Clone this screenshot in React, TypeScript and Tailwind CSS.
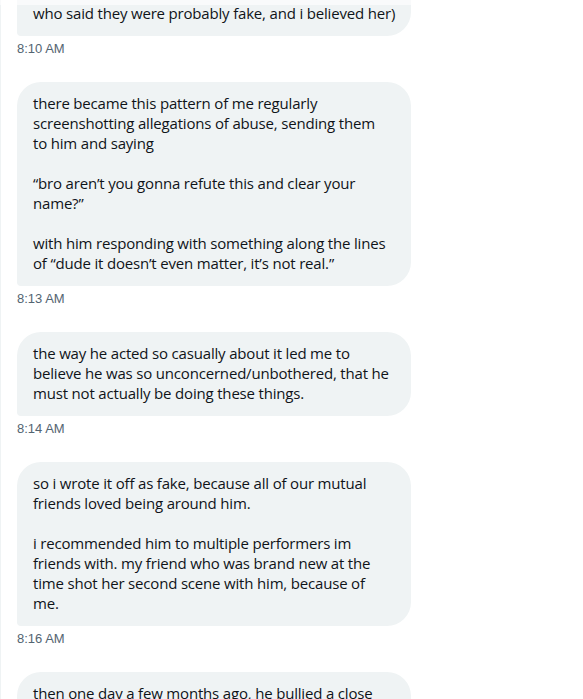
import React from "react";

type Message = {
  paragraphs: string[][];
  time?: string;
};

const messages: Message[] = [
  {
    // first bubble is scrolled partly out of view, the blank line stands in for the hidden one
    paragraphs: [["\u00a0", "who said they were probably fake, and i believed her)"]],
    time: "8:10 AM",
  },
  {
    paragraphs: [
      ["there became this pattern of me regularly", "screenshotting allegations of abuse, sending them", "to him and saying"],
      ["\u201cbro aren\u2019t you gonna refute this and clear your", "name?\u201d"],
      ["with him responding with something along the lines", "of \u201cdude it doesn\u2019t even matter, it\u2019s not real.\u201d"],
    ],
    time: "8:13 AM",
  },
  {
    paragraphs: [
      ["the way he acted so casually about it led me to", "believe he was so unconcerned/unbothered, that he", "must not actually be doing these things."],
    ],
    time: "8:14 AM",
  },
  {
    paragraphs: [
      ["so i wrote it off as fake, because all of our mutual", "friends loved being around him."],
      ["i recommended him to multiple performers im", "friends with. my friend who was brand new at the", "time shot her second scene with him, because of", "me."],
    ],
    time: "8:16 AM",
  },
  {
    paragraphs: [["then one day a few months ago, he bullied a close", "friend of mine"]],
  },
];

const Bubble = ({ paragraphs }: { paragraphs: string[][] }) => (
  <div className="w-[394px] rounded-[24px] rounded-bl-[4px] bg-[#eff3f4] px-4 pt-[11px] pb-[13px] text-[15px] leading-5 tracking-[-0.18px] text-[#0f1419]">
    {paragraphs.map((lines, i) => (
      <div key={i}>
        {i > 0 && <div className="h-5" />}
        {lines.map((line, j) => (
          <div key={j} className="whitespace-nowrap">
            {line}
          </div>
        ))}
      </div>
    ))}
  </div>
);

const Timestamp = ({ time }: { time: string }) => (
  <div className="mt-[5px] h-4 font-['Liberation_Sans',Arial,sans-serif] text-[13px] leading-4 text-[#536471]">
    {time}
  </div>
);

export default function App() {
  return (
    <div className="relative h-[699px] w-[583px] overflow-hidden bg-white font-['Open_Sans','Liberation_Sans',Arial,sans-serif]">
      <div className="-mt-[28px] flex flex-col border-l border-[#eff3f4] pl-4">
        {messages.map((m, i) => (
          <div key={i} className="pb-[25px]">
            <Bubble paragraphs={m.paragraphs} />
            {m.time && <Timestamp time={m.time} />}
          </div>
        ))}
      </div>
      <div className="absolute left-0 right-0 top-0 h-[5px] bg-white/60" />
    </div>
  );
}
